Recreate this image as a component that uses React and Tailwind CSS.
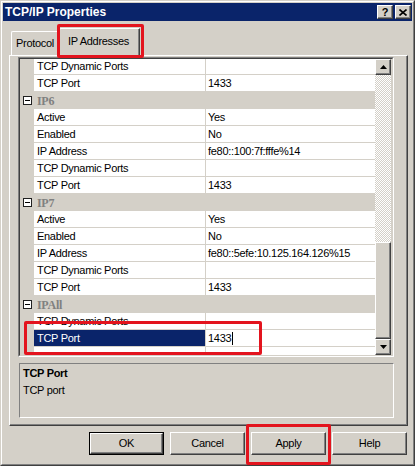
import React from "react";

const rows = [
  { l: "TCP Dynamic Ports", v: "", first: true },
  { l: "TCP Port", v: "1433" },
  { cat: "IP6" },
  { l: "Active", v: "Yes" },
  { l: "Enabled", v: "No" },
  { l: "IP Address", v: "fe80::100:7f:fffe%14" },
  { l: "TCP Dynamic Ports", v: "" },
  { l: "TCP Port", v: "1433" },
  { cat: "IP7" },
  { l: "Active", v: "Yes" },
  { l: "Enabled", v: "No" },
  { l: "IP Address", v: "fe80::5efe:10.125.164.126%15" },
  { l: "TCP Dynamic Ports", v: "" },
  { l: "TCP Port", v: "1433" },
  { cat: "IPAll" },
  { l: "TCP Dynamic Ports", v: "" },
  { l: "TCP Port", v: "1433", sel: true },
];

function MinusBox() {
  return (
    <div className="w-[9px] h-[9px] border border-[#202020] bg-white flex items-center justify-center">
      <div className="w-[5px] h-[1px] bg-black" />
    </div>
  );
}

function Row({ r }) {
  if (r.cat) {
    return (
      <div className="flex h-[17px] bg-[#d4d0c8]">
        <div className="w-[14px] flex items-center justify-center pl-[1px]">
          <MinusBox />
        </div>
        <div className="flex-1 flex items-center pl-[3px] font-['Liberation_Serif',serif] font-bold text-[12px] text-[#808080]">
          {r.cat}
        </div>
      </div>
    );
  }
  return (
    <div className={`flex ${r.first ? "h-[16px]" : "h-[17px]"}`}>
      <div className="w-[14px] bg-[#d4d0c8]" />
      <div
        className={`w-[172px] border-b border-r border-[#d4d0c8] flex items-center pl-[3px] ${
          r.sel ? "bg-[#0a246a] text-white" : "bg-white text-black"
        }`}
      >
        {r.l}
      </div>
      <div className="w-[169px] bg-white border-b border-[#d4d0c8] flex items-center pl-[2px] text-black whitespace-nowrap">
        {r.v}
        {r.sel && <span className="inline-block w-[1px] h-[13px] bg-black ml-[1px]" />}
      </div>
    </div>
  );
}

function ScrollBtn({ up }) {
  return (
    <div className="h-[16px] w-[16px] bg-[#d4d0c8] border-t border-l border-t-white border-l-white border-b border-r border-b-[#404040] border-r-[#404040] shadow-[inset_-1px_-1px_0_#808080] flex items-center justify-center">
      <svg width="7" height="4" viewBox="0 0 7 4">
        {up ? (
          <path d="M3.5 0 L7 4 L0 4 Z" fill="#000" />
        ) : (
          <path d="M0 0 L7 0 L3.5 4 Z" fill="#000" />
        )}
      </svg>
    </div>
  );
}

function Button({ children, def }) {
  const inner = (
    <div className="w-full h-full bg-[#d4d0c8] border-t border-l border-t-white border-l-white border-b border-r border-b-[#404040] border-r-[#404040] shadow-[inset_-1px_-1px_0_#808080] flex items-center justify-center text-black">
      {children}
    </div>
  );
  if (def) {
    return <div className="w-[75px] h-[23px] border border-black">{inner}</div>;
  }
  return <div className="w-[75px] h-[23px]">{inner}</div>;
}

function TitleBtn({ children }) {
  return (
    <div className="w-[16px] h-[14px] bg-[#d4d0c8] border-t border-l border-t-white border-l-white border-b border-r border-b-[#404040] border-r-[#404040] shadow-[inset_-1px_-1px_0_#808080] flex items-center justify-center">
      {children}
    </div>
  );
}

export default function App() {
  return (
    <div className="relative w-[415px] h-[466px] bg-[#d4d0c8] font-['Liberation_Sans',Arial,sans-serif] text-[11px] tracking-[-0.3px] leading-none select-none">
      <div className="w-full h-full border border-t-[#d4d0c8] border-l-[#d4d0c8] border-b-[#404040] border-r-[#404040]">
        <div className="w-full h-full border border-t-white border-l-white border-b-[#808080] border-r-[#808080] p-[1px] flex flex-col">
          {/* Title bar */}
          <div className="h-[18px] bg-[#0a246a] flex items-center justify-between pl-[2px] pr-[1px]">
            <span className="text-white font-bold text-[12px] tracking-normal">TCP/IP Properties</span>
            <div className="flex gap-[2px]">
              <TitleBtn>
                <span className="font-bold text-[11px] text-black tracking-normal leading-none">?</span>
              </TitleBtn>
              <TitleBtn>
                <svg width="8" height="7" viewBox="0 0 8 7">
                  <path d="M0.5 0.5 L7.5 6.5 M7.5 0.5 L0.5 6.5" stroke="#000" strokeWidth="1.6" />
                </svg>
              </TitleBtn>
            </div>
          </div>

          {/* Tabs */}
          <div className="mt-[7px] h-[27px] flex items-end pl-[6px]">
            <div className="ml-[2px] w-[48px] shrink-0 h-[24px] border-t border-l border-t-white border-l-white border-r border-r-[#404040] shadow-[inset_-1px_0_0_#808080] rounded-tl-[2px] flex items-center pl-[4px] pb-[1px] text-black whitespace-nowrap">
              Protocol
            </div>
            <div className="relative z-10 w-[81px] shrink-0 h-[28px] -mb-[1px] bg-[#d4d0c8] border-t border-l border-t-white border-l-white border-r border-r-[#404040] shadow-[inset_-1px_0_0_#808080] rounded-tl-[2px] flex items-center pl-[8px] pb-[3px] text-black whitespace-nowrap">
              IP Addresses
            </div>
          </div>

          {/* Tab panel */}
          <div className="ml-[6px] w-[399px] h-[371px] border border-t-white border-l-white border-b-[#404040] border-r-[#404040] shadow-[inset_-1px_-1px_0_#808080] flex flex-col">
            {/* Property grid */}
            <div className="ml-[8px] mt-[1px] w-[376px] h-[300px] border border-t-[#808080] border-l-[#808080] border-b-white border-r-white">
              <div className="w-full h-full border border-t-[#404040] border-l-[#404040] border-b-[#d4d0c8] border-r-[#d4d0c8] flex">
                <div className="w-[355px] flex flex-col overflow-hidden">
                  {rows.map((r, i) => (
                    <Row key={i} r={r} />
                  ))}
                  <div className="flex flex-1">
                    <div className="w-[14px] bg-[#d4d0c8]" />
                    <div className="w-[172px] bg-white border-r border-[#d4d0c8]" />
                    <div className="flex-1 bg-white" />
                  </div>
                </div>
                <div className="w-[16px] flex flex-col">
                  <ScrollBtn up />
                  <div className="flex-1 bg-[image:repeating-conic-gradient(#d4d0c8_0_25%,#ffffff_0_50%)] bg-[length:2px_2px]" />
                  <div className="h-[97px] bg-[#d4d0c8] border-t border-l border-t-white border-l-white border-b border-r border-b-[#404040] border-r-[#404040] shadow-[inset_-1px_-1px_0_#808080]" />
                  <ScrollBtn />
                </div>
              </div>
            </div>

            {/* Description */}
            <div className="ml-[9px] mt-[6px] w-[375px] h-[55px] border border-t-[#808080] border-l-[#808080] border-b-white border-r-white pl-[3px] pt-[3px] text-black">
              <div className="font-bold h-[13px] flex items-center">TCP Port</div>
              <div className="mt-[4px] h-[13px] flex items-center">TCP port</div>
            </div>
          </div>

          {/* Buttons */}
          <div className="mt-[6px] flex justify-end gap-[6px] pr-[5px]">
            <Button def>OK</Button>
            <Button>Cancel</Button>
            <Button>Apply</Button>
            <Button>Help</Button>
          </div>
        </div>
      </div>

      {/* Annotation boxes */}
      <div className="absolute left-[57px] top-[24px] w-[87px] h-[34px] border-[3px] border-[#e3141e] rounded-[2px] z-20" />
      <div className="absolute left-[24px] top-[321px] w-[238px] h-[34px] border-[3px] border-[#e3141e] rounded-[2px] z-20" />
      <div className="absolute left-[246px] top-[424px] w-[85px] h-[41px] border-[3px] border-[#e3141e] rounded-[2px] z-20" />
    </div>
  );
}
